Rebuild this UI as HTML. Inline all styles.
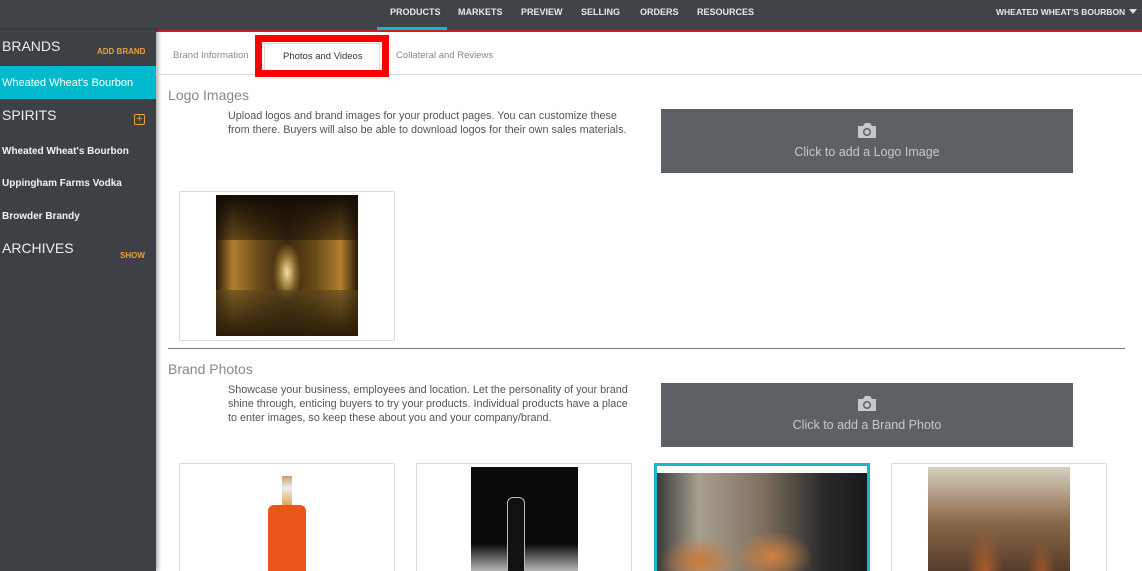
<!DOCTYPE html>
<html style="overflow:hidden"><head><style>
*{margin:0;padding:0;box-sizing:border-box}
html,body{width:1142px;height:571px;overflow:hidden}
body{background:#fff;font-family:"Liberation Sans",sans-serif;position:relative}
.a{position:absolute;white-space:nowrap}
.top{left:0;top:0;width:1142px;height:30px;background:#404448}
.red{left:156px;top:30px;width:986px;height:2px;background:#c8202a}
.nav{top:7px;font-size:9px;font-weight:bold;color:#e8e8e8}
.side{left:0;top:30px;width:156px;height:541px;background:#3d4146;box-shadow:2px 0 4px rgba(0,0,0,.35)}
.h{color:#eee;font-size:14px}
.or{color:#e8a23a;font-size:8px;font-weight:bold}
.it{color:#f2f2f2;font-size:10px;font-weight:bold;left:2px}
.tab{font-size:9.5px;color:#888;top:50px}
.sec{font-size:14px;color:#888;left:168px}
.p{font-size:10.8px;color:#555;line-height:14px;left:228px}
.up{background:#5d6166;color:#c8c8c8;font-size:12.5px;text-align:center}
.card{border:1px solid #ddd;background:#fff;overflow:hidden}
</style></head><body>
<div class="a top"></div>
<div class="a red"></div>
<div class="a nav" style="left:390px">PRODUCTS</div>
<div class="a" style="left:377px;top:27px;width:70px;height:3px;background:#1ab6c9"></div>
<div class="a nav" style="left:458px">MARKETS</div>
<div class="a nav" style="left:521px">PREVIEW</div>
<div class="a nav" style="left:581px">SELLING</div>
<div class="a nav" style="left:640px">ORDERS</div>
<div class="a nav" style="left:697px">RESOURCES</div>
<div class="a nav" style="left:996px;font-size:8.5px">WHEATED WHEAT'S BOURBON</div>
<div class="a" style="left:1129px;top:9px;width:0;height:0;border-left:4px solid transparent;border-right:4px solid transparent;border-top:5px solid #ddd"></div>

<div class="a side"></div>
<div class="a h" style="left:2px;top:38px">BRANDS</div>
<div class="a or" style="left:97px;top:47px">ADD BRAND</div>
<div class="a" style="left:0;top:66px;width:156px;height:33px;background:#00b9cc"></div>
<div class="a" style="left:2px;top:77px;color:#fff;font-size:11px">Wheated Wheat's Bourbon</div>
<div class="a h" style="left:2px;top:107px">SPIRITS</div>
<div class="a" style="left:134px;top:114px;width:11px;height:11px;border:1px solid #e8a23a;border-radius:2px;color:#e8a23a;font-size:11px;line-height:9px;text-align:center">+</div>
<div class="a it" style="top:146px">Wheated Wheat's Bourbon</div>
<div class="a it" style="top:178px">Uppingham Farms Vodka</div>
<div class="a it" style="top:211px">Browder Brandy</div>
<div class="a h" style="left:2px;top:240px">ARCHIVES</div>
<div class="a or" style="left:120px;top:251px">SHOW</div>

<div class="a tab" style="left:173px">Brand Information</div>
<div class="a" style="left:255px;top:35px;width:134px;height:42px;border:7px solid #f00;background:#fff"></div>
<div class="a" style="left:264px;top:43px;width:116px;height:27px;border:1px solid #ddd;border-bottom:none"></div>
<div class="a" style="left:283px;top:51px;font-size:9.5px;color:#333">Photos and Videos</div>
<div class="a tab" style="left:396px">Collateral and Reviews</div>
<div class="a" style="left:389px;top:74px;width:753px;height:1px;background:#ddd"></div>
<div class="a" style="left:156px;top:74px;width:99px;height:1px;background:#ddd"></div>

<div class="a sec" style="top:87px">Logo Images</div>
<div class="a p" style="top:109px">Upload logos and brand images for your product pages. You can customize these<br>from there. Buyers will also be able to download logos for their own sales materials.</div>
<div class="a up" style="left:661px;top:109px;width:412px;height:64px;padding-top:36px">Click to add a Logo Image</div>
<div class="a card" style="left:179px;top:191px;width:216px;height:150px"></div>
<div class="a" style="left:216px;top:195px;width:142px;height:141px;background:radial-gradient(ellipse 14px 30px at 50% 55%,#f4e1a0,#8a6a2a 60%,transparent 100%),linear-gradient(90deg,#2a1a08,#b08030 12%,#6a4a18 30%,#3a2810 50%,#6a4a18 70%,#b08030 88%,#2a1a08),#3a2a10"></div>
<div class="a" style="left:216px;top:195px;width:142px;height:45px;background:linear-gradient(#120c05,rgba(30,20,8,.5))"></div>
<div class="a" style="left:216px;top:290px;width:142px;height:46px;background:linear-gradient(rgba(90,70,30,.6),#2a1c08)"></div>

<div class="a" style="left:168px;top:348px;width:957px;height:1px;background:#777"></div>
<div class="a sec" style="top:361px">Brand Photos</div>
<div class="a p" style="top:383px">Showcase your business, employees and location. Let the personality of your brand<br>shine through, enticing buyers to try your products. Individual products have a place<br>to enter images, so keep these about you and your company/brand.</div>
<div class="a up" style="left:661px;top:383px;width:412px;height:64px;padding-top:35px">Click to add a Brand Photo</div>
<svg class="a" style="left:856px;top:121px" width="22" height="20" viewBox="0 0 22 20"><path d="M2 5h5l2-3h5l2 3h4v12H2z" fill="#c8c8c8"/><circle cx="11" cy="11" r="4" fill="#5d6166"/><circle cx="11" cy="11" r="2.5" fill="#c8c8c8"/></svg>
<svg class="a" style="left:856px;top:394px" width="22" height="20" viewBox="0 0 22 20"><path d="M2 5h5l2-3h5l2 3h4v12H2z" fill="#c8c8c8"/><circle cx="11" cy="11" r="4" fill="#5d6166"/><circle cx="11" cy="11" r="2.5" fill="#c8c8c8"/></svg>

<div class="a card" style="left:179px;top:463px;width:216px;height:120px"></div>
<div class="a" style="left:282px;top:476px;width:10px;height:30px;background:linear-gradient(#c8a070,#eee 40%,#e8a050)"></div>
<div class="a" style="left:268px;top:505px;width:38px;height:70px;background:#e8561a;border-radius:6px 6px 0 0"></div>
<div class="a card" style="left:416px;top:463px;width:216px;height:120px"></div>
<div class="a" style="left:471px;top:467px;width:107px;height:110px;background:linear-gradient(#0a0a0a 70%,#ddd)"></div>
<div class="a" style="left:507px;top:497px;width:18px;height:80px;border:1px solid #bbb;border-radius:6px 6px 0 0;background:#111"></div>
<div class="a" style="left:654px;top:463px;width:216px;height:120px;border:3px solid #1ab6c9;background:#fff"></div>
<div class="a" style="left:657px;top:473px;width:210px;height:98px;background:radial-gradient(ellipse 40px 25px at 20% 90%,#c87838,transparent),radial-gradient(ellipse 40px 25px at 55% 85%,#d08040,transparent),linear-gradient(90deg,#3a3a3a,#a8a090 20%,#807060 50%,#282828 80%,#1a1a1a)"></div>
<div class="a card" style="left:891px;top:463px;width:216px;height:120px"></div>
<div class="a" style="left:928px;top:467px;width:142px;height:110px;background:radial-gradient(ellipse 18px 50px at 40% 100%,#b0602a,transparent),radial-gradient(ellipse 14px 40px at 80% 100%,#a0582a,transparent),linear-gradient(#d8d0c0,#8a6848 50%,#503828)"></div>
</body></html>
